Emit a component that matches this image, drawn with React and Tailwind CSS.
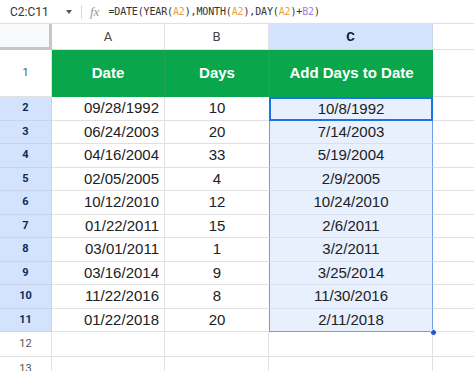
import React from 'react';

const rows = [
  ['09/28/1992', '10', '10/8/1992'],
  ['06/24/2003', '20', '7/14/2003'],
  ['04/16/2004', '33', '5/19/2004'],
  ['02/05/2005', '4', '2/9/2005'],
  ['10/12/2010', '12', '10/24/2010'],
  ['01/22/2011', '15', '2/6/2011'],
  ['03/01/2011', '1', '3/2/2011'],
  ['03/16/2014', '9', '3/25/2014'],
  ['11/22/2016', '8', '11/30/2016'],
  ['01/22/2018', '20', '2/11/2018'],
];

const font = { fontFamily: 'Roboto, "Liberation Sans", Arial, sans-serif' };

export default function App() {
  return (
    <div className="w-[474px] h-[371px] overflow-hidden bg-white text-[#202124]" style={font}>
      {/* formula bar */}
      <div className="h-[24px] flex items-center border-b border-[#e1e1e1] text-[12px]">
        <div className="w-[60px] pl-[10px] text-[#333]">C2:C11</div>
        <div className="w-0 h-0 border-l-[3.5px] border-r-[3.5px] border-t-[4px] border-l-transparent border-r-transparent border-t-[#555] ml-[6px]"></div>
        <div className="w-px h-[14px] bg-[#dadce0] ml-[9px]"></div>
        <div className="ml-[8px] text-[#999] italic text-[13px]" style={{ fontFamily: '"Liberation Serif", serif' }}>fx</div>
        <div className="ml-[9px] text-[10px] text-[#333] tracking-[-0.15px]" style={{ fontFamily: '"DejaVu Sans Mono", "Liberation Mono", monospace' }}>
          =DATE(YEAR(<span className="text-[#e8a23c]">A2</span>),MONTH(<span className="text-[#e8a23c]">A2</span>),DAY(<span className="text-[#e8a23c]">A2</span>)+<span className="text-[#a27fd6]">B2</span>)
        </div>
      </div>

      <div className="relative">
        {/* column headers */}
        <div className="flex h-[26px] text-[13px]">
          <div className="w-[52px] bg-[#f8f9fa] border-r-[3px] border-b-[3px] border-[#c4c7c5]"></div>
          <div className="w-[113px] flex items-center justify-center border-r border-b border-[#e1e1e1] text-[#444]">A</div>
          <div className="w-[104px] flex items-center justify-center border-r border-b border-[#e1e1e1] text-[#444]">B</div>
          <div className="w-[164px] flex items-center justify-center bg-[#d3e3fd] border-r border-b border-[#c8d4ea] font-bold text-[#0b1a33]">C</div>
          <div className="flex-1 border-b border-[#e1e1e1]"></div>
        </div>

        {/* row 1 */}
        <div className="flex h-[47px]">
          <div className="w-[52px] flex items-center justify-center text-[11px] text-[#555] border-r border-b border-[#e1e1e1]">1</div>
          <div className="w-[217px] flex bg-[#0aa64c] text-white font-bold text-[15px]" style={{ fontFamily: '"Liberation Sans", Arial, sans-serif' }}>
            <div className="w-[113px] flex items-center justify-center border-r border-[#26a55a]">Date</div>
            <div className="w-[104px] flex items-center justify-center">Days</div>
          </div>
          <div className="w-[164px] flex items-center justify-center bg-[#0aa64c] border-l border-[#26a55a] text-white font-bold text-[15px]" style={{ fontFamily: '"Liberation Sans", Arial, sans-serif' }}>Add Days to Date</div>
          <div className="flex-1 border-b border-[#e1e1e1]"></div>
        </div>

        {/* data rows */}
        {rows.map((r, i) => (
          <div key={i} className="flex h-[23.5px] text-[15px]" style={{ fontFamily: '"Liberation Sans", Arial, sans-serif' }}>
            <div className="w-[52px] flex items-center justify-center bg-[#d3e3fd] border-r border-b border-[#c8d4ea] text-[11px] font-bold text-[#0b2a5c]" style={font}>{i + 2}</div>
            <div className="w-[113px] flex items-center justify-end pr-[5px] border-r border-b border-[#e1e1e1]">{r[0]}</div>
            <div className="w-[104px] flex items-center justify-center border-b border-[#e1e1e1]">{r[1]}</div>
            <div className={`w-[164px] flex items-center justify-center bg-[#e8f0fe] border-l border-r border-b ${i === 0 ? 'border-[#1a73e8] border-t-2 border-l-2 border-r-2 border-b-2' : i === 9 ? 'border-l-[#6d9eeb] border-r-[#6d9eeb] border-b-[#6d9eeb] border-t-0' : 'border-l-[#6d9eeb] border-r-[#6d9eeb] border-b-[#d6e0f0]'}`}>{r[2]}</div>
            <div className="flex-1 border-b border-[#e1e1e1]"></div>
          </div>
        ))}

        {/* rows 12, 13 */}
        {[12, 13].map((n) => (
          <div key={n} className="flex h-[25px]">
            <div className="w-[52px] flex items-center justify-center text-[11px] text-[#555] border-r border-b border-[#e1e1e1]">{n}</div>
            <div className="w-[113px] border-r border-b border-[#e1e1e1]"></div>
            <div className="w-[104px] border-r border-b border-[#e1e1e1]"></div>
            <div className="w-[164px] border-r border-b border-[#e1e1e1]"></div>
            <div className="flex-1 border-b border-[#e1e1e1]"></div>
          </div>
        ))}

        {/* fill handle */}
        <div className="absolute left-[430px] top-[305px] w-[7px] h-[7px] rounded-full bg-[#1a57d0] border border-white"></div>
      </div>
    </div>
  );
}
